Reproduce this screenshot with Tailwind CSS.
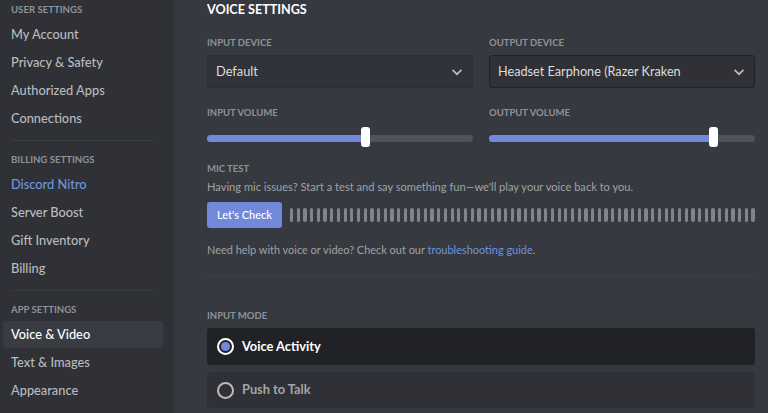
<!DOCTYPE html>
<html lang="en">
<head>
<meta charset="UTF-8" />
<title>Voice Settings</title>
<script src="https://cdn.jsdelivr.net/npm/@tailwindcss/browser@4"></script>
</head>
<body class="w-[768px] h-[413px] overflow-hidden bg-[#36393f] font-['Lato','Noto_Sans',sans-serif]">
<div class="flex h-[413px] overflow-hidden">
  <!-- sidebar -->
  <aside class="w-[174px] shrink-0 h-full bg-[#2f3136] pl-[3px] overflow-hidden">
    <div class="w-[160px]">
      <div class="h-[18px] pl-2 text-[9.6px] leading-[20px] font-bold text-[#8e9297]">USER SETTINGS</div>
      <div class="h-[28px] mt-[2px] pl-2 text-[12.8px] leading-[28px] font-medium text-[#b9bbbe]">My Account</div>
      <div class="h-[28px] pl-2 text-[12.8px] leading-[28px] font-medium text-[#b9bbbe]">Privacy &amp; Safety</div>
      <div class="h-[28px] pl-2 text-[12.8px] leading-[28px] font-medium text-[#b9bbbe]">Authorized Apps</div>
      <div class="h-[28px] pl-2 text-[12.8px] leading-[28px] font-medium text-[#b9bbbe]">Connections</div>
      <div class="mx-2 mt-[8px] h-px w-[143px] bg-[#3a3d43]"></div>
      <div class="mt-[9px] h-[18px] pl-2 text-[9.6px] leading-[20px] font-bold text-[#8e9297]">BILLING SETTINGS</div>
      <div class="h-[28px] mt-[2px] pl-2 text-[12.8px] leading-[28px] font-medium text-[#6f94dc]">Discord Nitro</div>
      <div class="h-[28px] pl-2 text-[12.8px] leading-[28px] font-medium text-[#b9bbbe]">Server Boost</div>
      <div class="h-[28px] pl-2 text-[12.8px] leading-[28px] font-medium text-[#b9bbbe]">Gift Inventory</div>
      <div class="h-[28px] pl-2 text-[12.8px] leading-[28px] font-medium text-[#b9bbbe]">Billing</div>
      <div class="mx-2 mt-[8px] h-px w-[143px] bg-[#3a3d43]"></div>
      <div class="mt-[9px] h-[18px] pl-2 text-[9.6px] leading-[20px] font-bold text-[#8e9297]">APP SETTINGS</div>
      <div class="h-[27px] mt-[3px] pl-2 rounded-[3px] bg-[#393c43] text-[12.8px] leading-[27px] font-medium text-white">Voice &amp; Video</div>
      <div class="h-[28px] pl-2 text-[12.8px] leading-[28px] font-medium text-[#b9bbbe]">Text &amp; Images</div>
      <div class="h-[28px] pl-2 text-[12.8px] leading-[28px] font-medium text-[#b9bbbe]">Appearance</div>
    </div>
  </aside>

  <!-- main -->
  <main class="w-[548px] ml-[33px] shrink-0">
    <h2 class="h-[20px] text-[12.6px] leading-[20px] font-bold text-white">VOICE SETTINGS</h2>

    <div class="mt-[14px] grid grid-cols-2 gap-x-4">
      <div>
        <div class="h-[16px] text-[9.5px] leading-[18px] font-bold text-[#8e9297]">INPUT DEVICE</div>
        <div class="mt-[5px] h-[33px] px-[8px] flex items-center justify-between rounded-[3px] bg-[#303339] border border-[#2c2e33] text-[12.8px] text-[#dcddde]">
          <span class="pt-px">Default</span>
          <svg class="w-[12px] h-[12px] mr-px" viewBox="0 0 12 12" fill="none" stroke="#b9bbbe" stroke-width="1.7"><path d="M1.5 3.8 6 8.2l4.5-4.4"/></svg>
        </div>
      </div>
      <div>
        <div class="h-[16px] text-[9.5px] leading-[18px] font-bold text-[#8e9297]">OUTPUT DEVICE</div>
        <div class="mt-[5px] h-[33px] px-[8px] flex items-center justify-between rounded-[3px] bg-[#2f3136] border border-[#202225] text-[12.7px] text-[#dcddde]">
          <span class="pt-px">Headset Earphone (Razer Kraken</span>
          <svg class="w-[12px] h-[12px] mr-px" viewBox="0 0 12 12" fill="none" stroke="#b9bbbe" stroke-width="1.7"><path d="M1.5 3.8 6 8.2l4.5-4.4"/></svg>
        </div>
      </div>
    </div>

    <div class="mt-[16px] grid grid-cols-2 gap-x-4">
      <div>
        <div class="h-[16px] text-[9.5px] leading-[18px] font-bold text-[#8e9297]">INPUT VOLUME</div>
        <div class="relative mt-[15px] h-[7px] rounded-full bg-[#4f545c]">
          <div class="h-full w-[159px] rounded-full bg-[#7289da]"></div>
          <div class="absolute left-[154px] top-[-8px] w-[9px] h-[20px] rounded-[3px] bg-white"></div>
        </div>
      </div>
      <div>
        <div class="h-[16px] text-[9.5px] leading-[18px] font-bold text-[#8e9297]">OUTPUT VOLUME</div>
        <div class="relative mt-[15px] h-[7px] rounded-full bg-[#4f545c]">
          <div class="h-full w-[224px] rounded-full bg-[#7289da]"></div>
          <div class="absolute left-[220px] top-[-8px] w-[9px] h-[20px] rounded-[3px] bg-white"></div>
        </div>
      </div>
    </div>

    <div class="mt-[18px] h-[16px] text-[9.5px] leading-[18px] font-bold text-[#8e9297]">MIC TEST</div>
    <p class="mt-[2px] h-[18px] text-[11.1px] leading-[18px] text-[#9fa2a6]">Having mic issues? Start a test and say something fun—we'll play your voice back to you.</p>
    <div class="mt-[6px] flex items-center">
      <div class="w-[75px] h-[26px] rounded-[3px] bg-[#7289da] text-[11px] leading-[26px] text-center font-medium text-white">Let's Check</div>
      <div id="bars" class="ml-2 flex gap-[3.4px]"></div>
    </div>
    <p class="mt-[13px] h-[18px] text-[10.95px] leading-[18px] text-[#9fa2a6]">Need help with voice or video? Check out our <a class="text-[#6f94dc]">troubleshooting guide</a>.</p>
    <div class="mt-[16px] h-px bg-[#3e4147]"></div>

    <div class="mt-[31px] h-[16px] text-[9.5px] leading-[18px] font-bold text-[#8e9297]">INPUT MODE</div>
    <div class="mt-[5px] h-[37px] px-[10px] flex items-center gap-2 rounded-[3px] bg-[#202225]">
      <span class="w-[17px] h-[17px] rounded-full border-2 border-white flex items-center justify-center"><span class="w-[9px] h-[9px] rounded-full bg-[#7289da]"></span></span>
      <span class="text-[12.8px] font-bold text-white">Voice Activity</span>
    </div>
    <div class="mt-[7px] h-[36px] px-[10px] flex items-center gap-2 rounded-[3px] bg-[#2f3136]">
      <span class="w-[17px] h-[17px] rounded-full border-2 border-[#b9bbbe]"></span>
      <span class="pb-px text-[12.8px] font-bold text-[#a3a6aa]">Push to Talk</span>
    </div>
  </main>
</div>
<script>
  // mic level ticks
  var bars = document.getElementById('bars');
  for (var i = 0; i < 70; i++) {
    var b = document.createElement('span');
    b.className = 'block w-[3.3px] h-[14px] rounded-[2px] bg-[#80848b]';
    bars.appendChild(b);
  }
</script>
</body>
</html>
